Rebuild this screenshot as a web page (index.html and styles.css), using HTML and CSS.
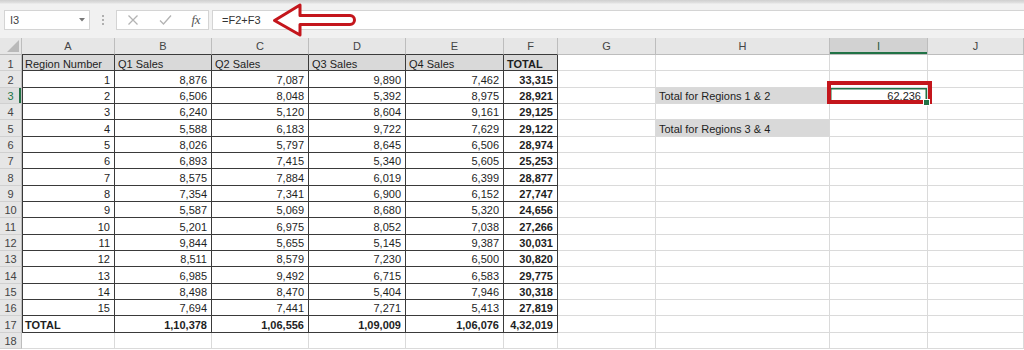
FILE: index.html
```html
<!DOCTYPE html>
<html>
<head>
<meta charset="utf-8">
<link rel="stylesheet" href="styles.css">
</head>
<body>
<div class="app">
  <div class="fbar">
    <div class="namebox"><span>I3</span><svg class="caret" width="6" height="4" viewBox="0 0 6 4"><path d="M0 0H6L3 3.5Z" fill="#777"/></svg></div>
    <div class="grip"><i></i><i></i><i></i></div>
    <div class="btns">
      <svg width="12" height="12" viewBox="0 0 12 12"><path d="M1.5 1.5L10.5 10.5M10.5 1.5L1.5 10.5" stroke="#b3b3b3" stroke-width="1.3" fill="none"/></svg>
      <svg width="13" height="12" viewBox="0 0 13 12"><path d="M1 6.5L4.5 10L12 1.5" stroke="#b3b3b3" stroke-width="1.3" fill="none"/></svg>
      <span class="fx">fx</span>
    </div>
    <div class="formula">=F2+F3</div>
    <svg class="arrow" width="90" height="38" viewBox="0 0 90 38"><path d="M4.5 20.5L30 5V15.5H80A4.5 4.5 0 0 1 80 24.5H30V35Z" fill="#fff" stroke="#c4161c" stroke-width="3" stroke-linejoin="round"/></svg>
  </div>
  <div class="sheet">
    <div class="r">
      <div class="corner"><svg width="12" height="12" viewBox="0 0 12 12"><path d="M12 0V12H0Z" fill="#b9b9b9"/></svg></div>
      <div class="ch tb">A</div><div class="ch tb">B</div><div class="ch tb">C</div><div class="ch tb">D</div><div class="ch tb">E</div><div class="ch tb">F</div><div class="ch">G</div><div class="ch">H</div><div class="ch chs">I</div><div class="ch">J</div>
    </div>
    <div class="r">
      <div class="rh">1</div>
      <div class="c t fa hd">Region Number</div><div class="c t hd">Q1 Sales</div><div class="c t hd">Q2 Sales</div><div class="c t hd">Q3 Sales</div><div class="c t hd">Q4 Sales</div><div class="c t hd b">TOTAL</div><div class="c"></div><div class="c"></div><div class="c"></div><div class="c"></div>
    </div>
    <div class="r">
      <div class="rh">2</div>
      <div class="c t fa n">1</div><div class="c t n">8,876</div><div class="c t n">7,087</div><div class="c t n">9,890</div><div class="c t n">7,462</div><div class="c t n b">33,315</div><div class="c"></div><div class="c"></div><div class="c"></div><div class="c"></div>
    </div>
    <div class="r">
      <div class="rh rhs">3</div>
      <div class="c t fa n">2</div><div class="c t n">6,506</div><div class="c t n">8,048</div><div class="c t n">5,392</div><div class="c t n">8,975</div><div class="c t n b">28,921</div><div class="c"></div><div class="c hd">Total for Regions 1 &amp; 2</div><div class="c n sel">62,236<span class="redbox"></span><span class="handle"></span></div><div class="c"></div>
    </div>
    <div class="r">
      <div class="rh">4</div>
      <div class="c t fa n">3</div><div class="c t n">6,240</div><div class="c t n">5,120</div><div class="c t n">8,604</div><div class="c t n">9,161</div><div class="c t n b">29,125</div><div class="c"></div><div class="c"></div><div class="c"></div><div class="c"></div>
    </div>
    <div class="r">
      <div class="rh">5</div>
      <div class="c t fa n">4</div><div class="c t n">5,588</div><div class="c t n">6,183</div><div class="c t n">9,722</div><div class="c t n">7,629</div><div class="c t n b">29,122</div><div class="c"></div><div class="c hd">Total for Regions 3 &amp; 4</div><div class="c"></div><div class="c"></div>
    </div>
    <div class="r">
      <div class="rh">6</div>
      <div class="c t fa n">5</div><div class="c t n">8,026</div><div class="c t n">5,797</div><div class="c t n">8,645</div><div class="c t n">6,506</div><div class="c t n b">28,974</div><div class="c"></div><div class="c"></div><div class="c"></div><div class="c"></div>
    </div>
    <div class="r">
      <div class="rh">7</div>
      <div class="c t fa n">6</div><div class="c t n">6,893</div><div class="c t n">7,415</div><div class="c t n">5,340</div><div class="c t n">5,605</div><div class="c t n b">25,253</div><div class="c"></div><div class="c"></div><div class="c"></div><div class="c"></div>
    </div>
    <div class="r">
      <div class="rh">8</div>
      <div class="c t fa n">7</div><div class="c t n">8,575</div><div class="c t n">7,884</div><div class="c t n">6,019</div><div class="c t n">6,399</div><div class="c t n b">28,877</div><div class="c"></div><div class="c"></div><div class="c"></div><div class="c"></div>
    </div>
    <div class="r">
      <div class="rh">9</div>
      <div class="c t fa n">8</div><div class="c t n">7,354</div><div class="c t n">7,341</div><div class="c t n">6,900</div><div class="c t n">6,152</div><div class="c t n b">27,747</div><div class="c"></div><div class="c"></div><div class="c"></div><div class="c"></div>
    </div>
    <div class="r">
      <div class="rh">10</div>
      <div class="c t fa n">9</div><div class="c t n">5,587</div><div class="c t n">5,069</div><div class="c t n">8,680</div><div class="c t n">5,320</div><div class="c t n b">24,656</div><div class="c"></div><div class="c"></div><div class="c"></div><div class="c"></div>
    </div>
    <div class="r">
      <div class="rh">11</div>
      <div class="c t fa n">10</div><div class="c t n">5,201</div><div class="c t n">6,975</div><div class="c t n">8,052</div><div class="c t n">7,038</div><div class="c t n b">27,266</div><div class="c"></div><div class="c"></div><div class="c"></div><div class="c"></div>
    </div>
    <div class="r">
      <div class="rh">12</div>
      <div class="c t fa n">11</div><div class="c t n">9,844</div><div class="c t n">5,655</div><div class="c t n">5,145</div><div class="c t n">9,387</div><div class="c t n b">30,031</div><div class="c"></div><div class="c"></div><div class="c"></div><div class="c"></div>
    </div>
    <div class="r">
      <div class="rh">13</div>
      <div class="c t fa n">12</div><div class="c t n">8,511</div><div class="c t n">8,579</div><div class="c t n">7,230</div><div class="c t n">6,500</div><div class="c t n b">30,820</div><div class="c"></div><div class="c"></div><div class="c"></div><div class="c"></div>
    </div>
    <div class="r">
      <div class="rh">14</div>
      <div class="c t fa n">13</div><div class="c t n">6,985</div><div class="c t n">9,492</div><div class="c t n">6,715</div><div class="c t n">6,583</div><div class="c t n b">29,775</div><div class="c"></div><div class="c"></div><div class="c"></div><div class="c"></div>
    </div>
    <div class="r">
      <div class="rh">15</div>
      <div class="c t fa n">14</div><div class="c t n">8,498</div><div class="c t n">8,470</div><div class="c t n">5,404</div><div class="c t n">7,946</div><div class="c t n b">30,318</div><div class="c"></div><div class="c"></div><div class="c"></div><div class="c"></div>
    </div>
    <div class="r">
      <div class="rh">16</div>
      <div class="c t fa n">15</div><div class="c t n">7,694</div><div class="c t n">7,441</div><div class="c t n">7,271</div><div class="c t n">5,413</div><div class="c t n b">27,819</div><div class="c"></div><div class="c"></div><div class="c"></div><div class="c"></div>
    </div>
    <div class="r">
      <div class="rh">17</div>
      <div class="c t fa b">TOTAL</div><div class="c t n b">1,10,378</div><div class="c t n b">1,06,556</div><div class="c t n b">1,09,009</div><div class="c t n b">1,06,076</div><div class="c t n b">4,32,019</div><div class="c"></div><div class="c"></div><div class="c"></div><div class="c"></div>
    </div>
    <div class="r">
      <div class="rh">18</div>
      <div class="c"></div><div class="c"></div><div class="c"></div><div class="c"></div><div class="c"></div><div class="c"></div><div class="c"></div><div class="c"></div><div class="c"></div><div class="c"></div>
    </div>
  </div>
</div>
</body>
</html>
```
FILE: styles.css
```css
html, body {
  margin: 0;
  padding: 0;
  background: #fff;
  overflow: hidden;
}
body {
  font-family: "Liberation Sans", Arial, sans-serif;
  font-size: 11px;
  color: #1e1e1e;
}
.app {
  width: 1024px;
  height: 350px;
  overflow: hidden;
}
.fbar {
  position: relative;
  display: flex;
  align-items: flex-start;
  height: 38px;
  box-sizing: border-box;
  padding: 10px 0 0 4px;
  background: linear-gradient(#cfcfcf 0, #e2e2e2 3px, #f1f1f1 4px, #f1f1f1 100%);
}
.namebox {
  display: flex;
  align-items: center;
  justify-content: space-between;
  width: 86px;
  height: 20px;
  box-sizing: border-box;
  padding: 0 4px 0 5px;
  background: #fff;
  border: 1px solid #d4d4d4;
  color: #444;
}
.caret { display: block; }
.grip {
  width: 26px;
  height: 20px;
  display: flex;
  flex-direction: column;
  align-items: center;
  justify-content: center;
  gap: 2px;
}
.grip i {
  display: block;
  width: 2px;
  height: 2px;
  background: #b0b0b0;
}
.btns {
  display: flex;
  align-items: center;
  justify-content: space-between;
  width: 93px;
  height: 20px;
  box-sizing: border-box;
  padding: 0 8px 0 10px;
  background: #fff;
  border: 1px solid #d4d4d4;
}
.btns svg { display: block; }
.fx {
  font-family: "Liberation Serif", "Times New Roman", serif;
  font-style: italic;
  font-size: 13px;
  color: #555;
  letter-spacing: -0.5px;
}
.formula {
  flex: 1;
  height: 20px;
  box-sizing: border-box;
  margin-left: 3px;
  padding-left: 9px;
  line-height: 18px;
  background: #fff;
  border: 1px solid #d4d4d4;
  border-right: none;
  color: #333;
}
.arrow {
  position: absolute;
  left: 270px;
  top: 0;
}
.sheet {
  display: grid;
  grid-template-columns: 22px 93px 97px 97px 97px 98px 54px 98px 174px 98px 96px;
  grid-template-rows: 17px repeat(18, 16.33px);
}
.r { display: contents; }
.corner {
  background: #e6e6e6;
  border-right: 1px solid #bdbdbd;
  border-bottom: 1px solid #bdbdbd;
  display: flex;
  align-items: flex-end;
  justify-content: flex-end;
  padding: 0 2px 2px 0;
  box-sizing: border-box;
}
.corner svg { display: block; }
.ch {
  background: #e6e6e6;
  border-right: 1px solid #bdbdbd;
  border-bottom: 1px solid #bdbdbd;
  box-sizing: border-box;
  text-align: center;
  line-height: 16px;
  color: #444;
}
.ch.tb { border-bottom-color: #3a3a3a; }
.chs {
  background: #d2d2d2;
  color: #1f5a3a;
  box-shadow: inset 0 -2px 0 #217346;
}
.rh {
  background: #e6e6e6;
  border-right: 1px solid #bdbdbd;
  border-bottom: 1px solid #d0d0d0;
  box-sizing: border-box;
  text-align: center;
  padding-top: 1.5px;
  line-height: 14px;
  color: #444;
  overflow: hidden;
}
.rhs {
  color: #217346;
  background: #dedede;
  box-shadow: inset -2px 0 0 #217346;
}
.c {
  border-right: 1px solid #dadada;
  border-bottom: 1px solid #dadada;
  box-sizing: border-box;
  padding: 1.5px 4px 0 3px;
  line-height: 14px;
  white-space: nowrap;
  overflow: hidden;
}
.c.t {
  border-right-color: #3a3a3a;
  border-bottom-color: #3a3a3a;
}
.c.fa { box-shadow: inset 1px 0 0 #3a3a3a; }
.hd { background: #d9d9d9; }
.n { text-align: right; }
.b { font-weight: bold; }
.sel {
  position: relative;
  overflow: visible;
  box-shadow: inset 0 0 0 1.5px #217346;
  padding-right: 6px;
}
.redbox {
  position: absolute;
  left: -3px;
  top: -7px;
  width: 105px;
  height: 23px;
  box-sizing: border-box;
  border: 4px solid #c4161c;
  pointer-events: none;
}
.handle {
  position: absolute;
  right: -3px;
  bottom: -3px;
  width: 5px;
  height: 5px;
  background: #217346;
  border: 1px solid #fff;
}
```
